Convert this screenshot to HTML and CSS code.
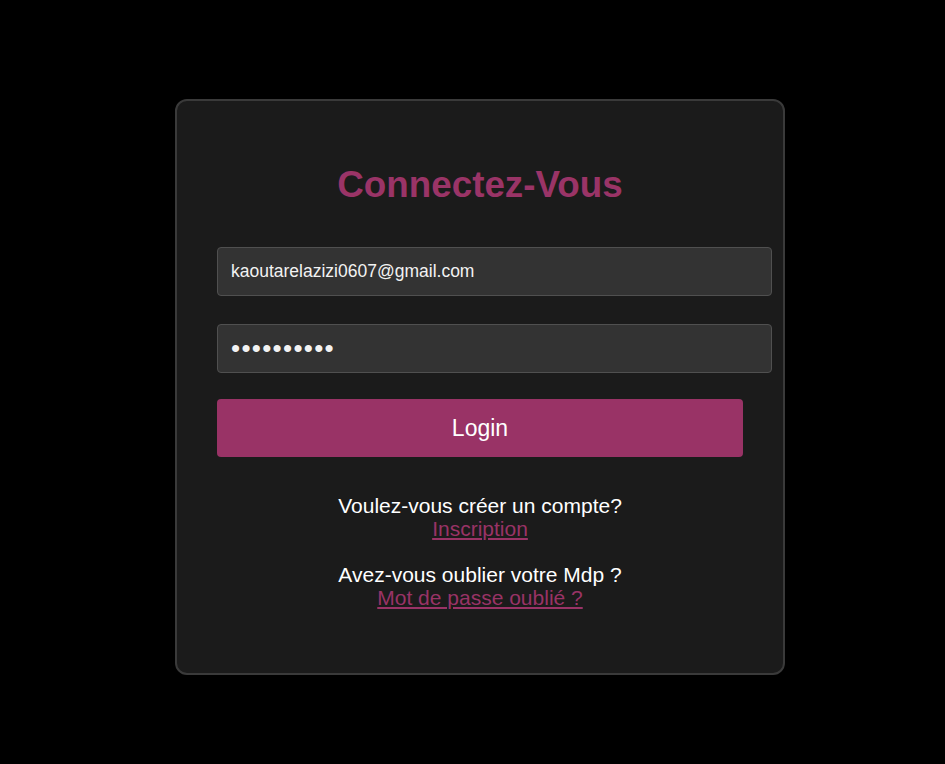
FILE: index.html
```html
<!DOCTYPE html>
<html lang="fr">
<head>
<meta charset="utf-8">
<title>Connectez-Vous</title>
<link rel="stylesheet" href="styles.css">
</head>
<body>
<main class="page">
  <form class="card" action="#">
    <h1 class="title">Connectez-Vous</h1>
    <input class="field field-email" type="email" value="kaoutarelazizi0607@gmail.com" aria-label="Email">
    <input class="field field-pass" type="password" value="kaoutar123" aria-label="Mot de passe" autofocus>
    <button class="btn" type="button">Login</button>
    <p class="note">Voulez-vous créer un compte?<br><a class="link" href="#">Inscription</a></p>
    <p class="note note-last">Avez-vous oublier votre Mdp ?<br><a class="link" href="#">Mot de passe oublié ?</a></p>
  </form>
</main>
</body>
</html>
```
FILE: styles.css
```css
html, body {
  margin: 0;
  padding: 0;
  background: #000;
  font-family: "Liberation Sans", Arial, sans-serif;
}

.page {
  display: flex;
  justify-content: center;
  align-items: flex-start;
  padding: 99px 0 0 15px;
}

.card {
  width: 526px;
  padding: 40px 40px 42px;
  background: #1b1b1b;
  border: 2px solid #3a3a3a;
  border-radius: 12px;
}

.title {
  margin: 24px 0 42px;
  font-size: 36.8px;
  line-height: 40px;
  font-weight: bold;
  color: #9a3467;
  text-align: center;
}

.field {
  display: block;
  box-sizing: border-box;
  width: calc(100% + 29px);
  height: 49px;
  margin: 0 0 28px;
  padding: 0 13px;
  background: #333333;
  border: 1px solid #505050;
  border-radius: 4px;
  color: #f2f2f2;
  font-family: "Liberation Sans", Arial, sans-serif;
  font-size: 17.5px;
  caret-color: #f2f2f2;
}

.field:focus {
  outline: none;
}

.field-pass {
  margin-bottom: 26px;
  font-size: 26px;
  letter-spacing: 1.3px;
}

.btn {
  display: block;
  width: 100%;
  height: 58px;
  margin: 0 0 37px;
  padding: 0;
  border: none;
  border-radius: 4px;
  background: #993366;
  color: #fff;
  font-family: "Liberation Sans", Arial, sans-serif;
  font-size: 23px;
}

.note {
  margin: 0 0 23px;
  font-size: 21px;
  line-height: 23px;
  color: #fff;
  text-align: center;
}

.note-last {
  margin-bottom: 22px;
}

.link {
  color: #993366;
  text-decoration: underline;
}
```
